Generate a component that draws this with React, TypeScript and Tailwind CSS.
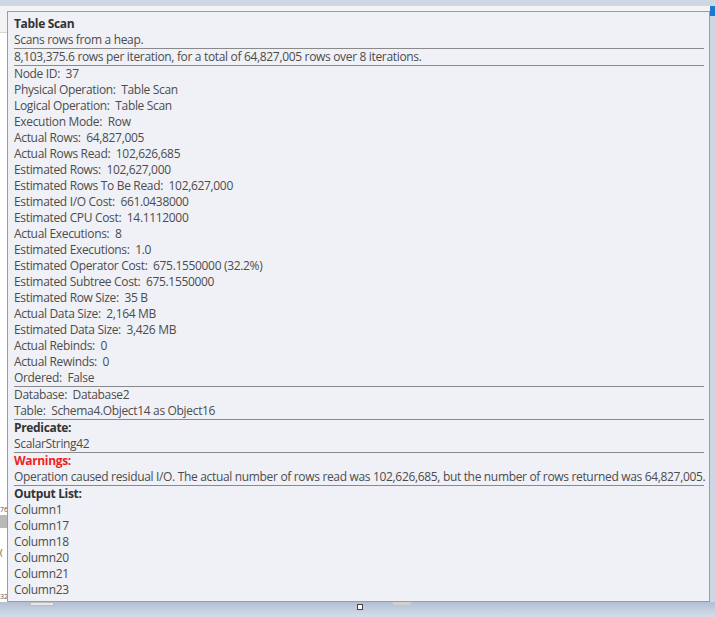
import React from 'react';

const props: [string, string][] = [
  ['Node ID', '37'],
  ['Physical Operation', 'Table Scan'],
  ['Logical Operation', 'Table Scan'],
  ['Execution Mode', 'Row'],
  ['Actual Rows', '64,827,005'],
  ['Actual Rows Read', '102,626,685'],
  ['Estimated Rows', '102,627,000'],
  ['Estimated Rows To Be Read', '102,627,000'],
  ['Estimated I/O Cost', '661.0438000'],
  ['Estimated CPU Cost', '14.1112000'],
  ['Actual Executions', '8'],
  ['Estimated Executions', '1.0'],
  ['Estimated Operator Cost', '675.1550000 (32.2%)'],
  ['Estimated Subtree Cost', '675.1550000'],
  ['Estimated Row Size', '35 B'],
  ['Actual Data Size', '2,164 MB'],
  ['Estimated Data Size', '3,426 MB'],
  ['Actual Rebinds', '0'],
  ['Actual Rewinds', '0'],
  ['Ordered', 'False'],
];

const columns = ['Column1', 'Column17', 'Column18', 'Column20', 'Column21', 'Column23'];

function Row({ children, className = '' }: { children: React.ReactNode; className?: string }) {
  return <div className={`h-4 leading-4 whitespace-nowrap ${className}`}>{children}</div>;
}

function Sep() {
  return <div className="h-px bg-[#8a8a8a] mr-[5px]" />;
}

function Prop({ name, value }: { name: string; value: string }) {
  return (
    <Row>
      {name}:&nbsp; {value}
    </Row>
  );
}

export default function App() {
  return (
    <div
      className="relative w-[715px] h-[617px] overflow-hidden bg-[#cfd7e4] flex flex-col"
      style={{ fontFamily: '"Open Sans", "Noto Sans", sans-serif' }}
    >
      <div className="h-[6px] shrink-0" />
      {/* window behind the tooltip */}
      <div className="flex flex-1">
        <div className="flex flex-col w-[710px] bg-white">
          <div className="h-[27px] bg-[#f3f3f3] border-b border-[#d5d5d5]" />
          <div className="flex-1 flex flex-col justify-end pb-[2px] text-[7px] text-[#555] leading-none w-[7px]">
            <div>76</div>
            <div className="h-[13px] bg-[#b9b9b9] mt-[2px]" />
            <div className="text-[9px] mt-[20px]">(</div>
            <div className="mt-[36px]">32</div>
          </div>
        </div>
        <div className="flex-1 flex flex-col">
          <div className="h-[10px] bg-[#1f77d0]" />
        </div>
      </div>
      {/* bottom strip */}
      <div className="h-[15px] shrink-0 bg-gradient-to-b from-[#b2bfd4] to-[#d5dde9] flex items-start">
        <div className="ml-[30px] w-[24px] h-[4px] bg-[#e8e8e8] border border-[#bdbdbd]" />
        <div className="ml-[303px] mt-[2px] w-[6px] h-[6px] bg-white border border-[#444]" />
        <div className="ml-[30px] w-[18px] h-[3px] bg-[#cfcfcf]" />
      </div>

      {/* tooltip */}
      <div className="absolute left-[7px] top-[11px] w-[703px] h-[591px] bg-[#f0f1f6] border border-[#9c9c9c] pl-[6px] pt-[4px] text-[12px] tracking-[-0.33px] text-[#4c4c4c] flex flex-col">
        <Row className="font-bold text-[#333333]">Table Scan</Row>
        <Row>Scans rows from a heap.</Row>
        <Sep />
        <Row>8,103,375.6 rows per iteration, for a total of 64,827,005 rows over 8 iterations.</Row>
        <Sep />
        {props.map(([n, v]) => (
          <Prop key={n} name={n} value={v} />
        ))}
        <Sep />
        <Prop name="Database" value="Database2" />
        <Prop name="Table" value="Schema4.Object14 as Object16" />
        <Sep />
        <Row className="font-bold text-[#333333]">Predicate:</Row>
        <Row>ScalarString42</Row>
        <Sep />
        <Row className="font-bold text-[#f01e1e]">Warnings:</Row>
        <Row>
          Operation caused residual I/O. The actual number of rows read was 102,626,685, but the number of rows
          returned was 64,827,005.
        </Row>
        <Sep />
        <Row className="font-bold text-[#333333]">Output List:</Row>
        {columns.map((c) => (
          <Row key={c}>{c}</Row>
        ))}
      </div>
    </div>
  );
}
